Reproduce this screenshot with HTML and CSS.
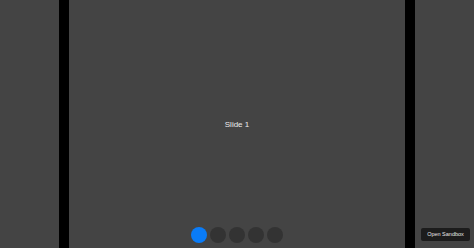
FILE: index.html
```html
<!DOCTYPE html>
<html>
<head>
<meta charset="utf-8">
<link rel="stylesheet" href="styles.css">
</head>
<body>
<div class="carousel">
  <div class="track">
    <div class="slide"></div>
    <div class="slide"><span class="label">Slide 1</span></div>
    <div class="slide"></div>
  </div>
  <div class="dots">
    <span class="dot active"></span>
    <span class="dot"></span>
    <span class="dot"></span>
    <span class="dot"></span>
    <span class="dot"></span>
  </div>
  <button class="sandbox">Open Sandbox</button>
</div>
</body>
</html>
```
FILE: styles.css
```css
html, body {
  margin: 0;
  padding: 0;
  background: #000;
  width: 474px;
  height: 248px;
  overflow: hidden;
  font-family: "Liberation Sans", Arial, sans-serif;
}
.carousel {
  position: relative;
  width: 474px;
  height: 248px;
  overflow: hidden;
}
.track {
  display: flex;
  justify-content: center;
  gap: 10px;
  height: 100%;
}
.slide {
  flex: 0 0 336px;
  height: 100%;
  background: #444444;
  display: flex;
  align-items: center;
  justify-content: center;
}
.label {
  color: #ececec;
  font-size: 8px;
}
.dots {
  position: absolute;
  left: 0;
  right: 0;
  bottom: 5px;
  display: flex;
  justify-content: center;
  gap: 3px;
}
.dot {
  width: 16px;
  height: 16px;
  border-radius: 50%;
  background: #333333;
}
.dot.active {
  background: #0a7cf8;
}
.sandbox {
  position: absolute;
  right: 4px;
  bottom: 7px;
  width: 49px;
  height: 13px;
  padding: 0;
  border: none;
  border-radius: 2px;
  background: #1c1c1c;
  color: #e8e8e8;
  font-family: "Liberation Sans", Arial, sans-serif;
  font-size: 5.5px;
  line-height: 13px;
  text-align: center;
}
```
